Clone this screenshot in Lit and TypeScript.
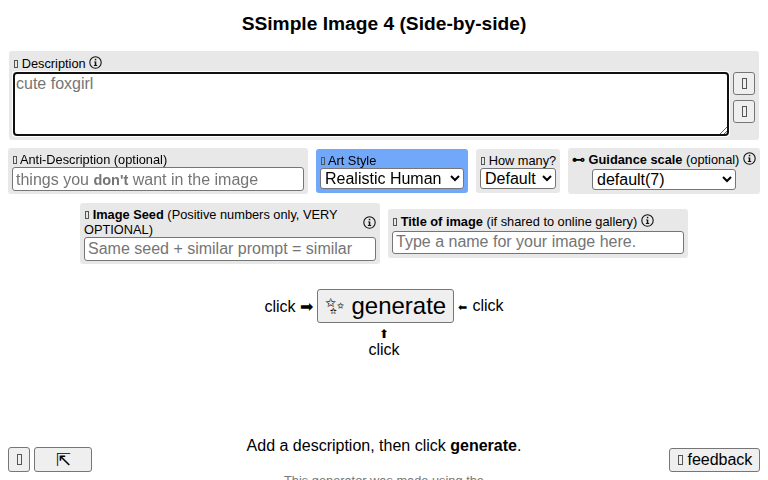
import { LitElement, html, css } from "lit";
import { customElement } from "lit/decorators.js";

const infoIcon = html`<svg class="info" viewBox="0 0 13 13" width="13" height="13" aria-label="info">
  <circle cx="6.5" cy="6.5" r="5.7" fill="none" stroke="#111" stroke-width="1.1"></circle>
  <rect x="5.8" y="2.8" width="1.5" height="1.5" fill="#111"></rect>
  <path d="M5 5.4h2.3v3.7H8.2v.9H4.9v-.9h.9V6.3H5z" fill="#111"></path>
</svg>`;

@customElement("app-root")
export default class AppRoot extends LitElement {
  static styles = css`
    :host {
      display: block;
      height: 480px;
      overflow: hidden;
      font-family: "Liberation Sans", Arial, sans-serif;
      font-size: 16px;
      color: #000;
      text-align: center;
    }
    h1 {
      margin: 0;
      padding-top: 13px;
      height: 38px;
      font-size: 19.2px;
      line-height: 22px;
      font-weight: bold;
    }
    .box {
      background: #e8e8e8;
      border-radius: 3px;
      padding: 4px;
      font-size: 12.8px;
      line-height: 15px;
      text-align: left;
      box-sizing: border-box;
      white-space: nowrap;
    }
    /* missing-glyph box, the reference has no emoji font */
    .tofu {
      display: inline-block;
      box-sizing: border-box;
      width: 0.32em;
      height: 0.65em;
      margin-left: 0.08em;
      border: 1px solid #555;
    }
    .info {
      flex: none;
      vertical-align: -1px;
    }
    .desc {
      width: 750px;
      height: 89px;
      margin-left: 9px;
    }
    .desc-head {
      height: 15px;
      padding-top: 1px;
    }
    .desc-body {
      display: flex;
      gap: 4px;
      margin-top: 1px;
    }
    textarea {
      flex: 1;
      height: 64px;
      box-sizing: border-box;
      margin: 0;
      padding: 2px;
      border: 1px solid #767676;
      border-radius: 3px;
      font-family: inherit;
      font-size: 16px;
    }
    .side {
      display: flex;
      flex-direction: column;
      gap: 5px;
    }
    .side button {
      width: 22px;
      height: 23px;
      padding: 0;
      font-size: 16px;
    }
    button {
      font-family: inherit;
      background: #efefef;
      border: 1px solid #767676;
      border-radius: 3px;
      color: #000;
    }
    .row {
      display: flex;
      justify-content: center;
      align-items: center;
      gap: 8px;
    }
    .row-1 {
      margin-top: 8px;
    }
    .row-2 {
      margin-top: 9px;
    }
    input,
    select {
      font-family: inherit;
      font-size: 16px;
      box-sizing: border-box;
      margin: 0;
      display: block;
      background: #fff;
      color: #000;
      border: 1px solid #767676;
      border-radius: 3px;
    }
    input {
      width: 100%;
      height: 24px;
      padding: 1px 3px;
    }
    .anti {
      width: 300px;
      height: 46px;
    }
    .ghost-wrap {
      position: relative;
    }
    .ghost {
      position: absolute;
      left: 4px;
      top: 1px;
      line-height: 24px;
      font-size: 16px;
      color: #757575;
      pointer-events: none;
    }
    .ghost b {
      font-size: 14.5px;
    }
    .style {
      width: 152px;
      height: 44px;
      background: #72a8f9;
    }
    .style select {
      width: 144px;
    }
    .many {
      width: 84px;
      height: 44px;
    }
    .many select {
      width: 76px;
    }
    .guidance {
      width: 192px;
      height: 46px;
    }
    .guidance select {
      width: 144px;
      margin: 2px auto 0;
    }
    .spread {
      display: flex;
      justify-content: space-between;
    }
    .seed {
      width: 300px;
      height: 61px;
    }
    .seed .spread {
      align-items: center;
    }
    .seed-label {
      width: 272px;
      white-space: normal;
    }
    .title {
      width: 300px;
      height: 48.5px;
    }
    .title label {
      display: block;
      padding-top: 1px;
      height: 16.5px;
    }
    .title input {
      height: 23px;
    }
    .gen {
      margin-top: 25px;
      display: flex;
      justify-content: center;
      align-items: center;
      gap: 4px;
      height: 34px;
    }
    .gen button {
      width: 137px;
      height: 34px;
      font-size: 24px;
      padding: 0;
      margin: 0;
    }
    .left-arrow {
      font-size: 11px;
      margin-right: 1px;
    }
    .stars {
      font-family: "DejaVu Sans", sans-serif;
    }
    .up {
      margin-top: 5px;
      font-size: 12px;
      line-height: 12px;
    }
    .under {
      line-height: 18px;
      margin-top: 1px;
    }
    .foot {
      margin-top: 78px;
      padding: 0 8px;
      display: grid;
      grid-template-columns: 1fr auto 1fr;
      align-items: start;
      height: 36px;
    }
    .foot-left {
      display: flex;
      gap: 4px;
      margin-top: 10px;
    }
    .foot-left button {
      height: 25px;
      padding: 0;
      font-size: 16px;
    }
    .moon {
      width: 22px;
    }
    .foot-left .corner {
      width: 58px;
      font-size: 18px;
    }
    .feedback {
      justify-self: end;
      margin-top: 11px;
      width: 91px;
      height: 24px;
      padding: 0;
      font-size: 16px;
    }
    .prompt {
      line-height: 18px;
    }
    .credit {
      font-size: 12.8px;
      line-height: 15px;
      color: #777;
    }
  `;

  firstUpdated() {
    this.renderRoot.querySelector("textarea")?.focus();
  }

  render() {
    const tofu = html`<span class="tofu"></span>`;
    return html`
      <h1>SSimple Image 4 (Side-by-side)</h1>
      <div class="box desc">
        <div class="desc-head">${tofu} Description ${infoIcon}</div>
        <div class="desc-body">
          <textarea placeholder="cute foxgirl"></textarea>
          <div class="side">
            <button>${tofu}</button>
            <button>${tofu}</button>
          </div>
        </div>
      </div>
      <div class="row row-1">
        <div class="box anti">
          <div>${tofu} Anti-Description (optional)</div>
          <div class="ghost-wrap">
            <input />
            <span class="ghost">things you <b>don't</b> want in the image</span>
          </div>
        </div>
        <div class="box style">
          <div>${tofu} Art Style</div>
          <select><option>Realistic Human</option></select>
        </div>
        <div class="box many">
          <div>${tofu} How many?</div>
          <select><option>Default</option></select>
        </div>
        <div class="box guidance">
          <div class="spread">
            <span><b>⊷ Guidance scale</b> (optional)</span>
            ${infoIcon}
          </div>
          <select><option>default(7)</option></select>
        </div>
      </div>
      <div class="row row-2">
        <div class="box seed">
          <div class="spread">
            <span class="seed-label">${tofu} <b>Image Seed</b> (Positive numbers only, VERY OPTIONAL)</span>
            ${infoIcon}
          </div>
          <input placeholder="Same seed + similar prompt = similar" />
        </div>
        <div class="box title">
          <label>${tofu} <b>Title of image</b> (if shared to online gallery) ${infoIcon}</label>
          <input placeholder="Type a name for your image here." />
        </div>
      </div>
      <div class="gen">
        <span>click ➡</span>
        <button><span class="stars">✨\uFE0E</span> generate</button>
        <span><span class="left-arrow">⬅</span> click</span>
      </div>
      <div class="up">⬆</div>
      <div class="under">click</div>
      <div class="foot">
        <div class="foot-left">
          <button class="moon">${tofu}</button>
          <button class="corner">⇱</button>
        </div>
        <div class="prompt">Add a description, then click <b>generate</b>.</div>
        <button class="feedback">${tofu} feedback</button>
      </div>
      <div class="credit">This generator was made using the</div>
    `;
  }
}
